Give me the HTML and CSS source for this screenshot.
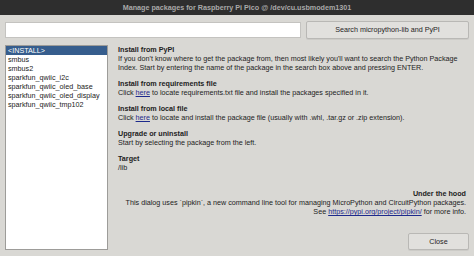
FILE: index.html
```html
<!DOCTYPE html>
<html>
<head>
<meta charset="utf-8">
<link rel="stylesheet" href="styles.css">
</head>
<body>
<div class="window">
  <div class="titlebar">Manage packages for Raspberry Pi Pico @ /dev/cu.usbmodem1301</div>
  <div class="searchrow">
    <div class="search-input"></div>
    <div class="btn search-btn">Search micropython-lib and PyPI</div>
  </div>
  <div class="main">
    <ul class="pkglist">
      <li class="selected">&lt;INSTALL&gt;</li>
      <li>smbus</li>
      <li>smbus2</li>
      <li>sparkfun_qwiic_i2c</li>
      <li>sparkfun_qwiic_oled_base</li>
      <li>sparkfun_qwiic_oled_display</li>
      <li>sparkfun_qwiic_tmp102</li>
    </ul>
    <div class="info">
      <div class="section">
        <div class="heading">Install from PyPI</div>
        <div>If you don't know where to get the package from, then most likely you'll want to search the Python Package Index. Start by entering the name of the package in the search box above and pressing ENTER.</div>
      </div>
      <div class="section">
        <div class="heading">Install from requirements file</div>
        <div>Click <a class="link">here</a> to locate requirements.txt file and install the packages specified in it.</div>
      </div>
      <div class="section">
        <div class="heading">Install from local file</div>
        <div>Click <a class="link">here</a> to locate and install the package file (usually with .whl, .tar.gz or .zip extension).</div>
      </div>
      <div class="section">
        <div class="heading">Upgrade or uninstall</div>
        <div>Start by selecting the package from the left.</div>
      </div>
      <div class="section">
        <div class="heading">Target</div>
        <div>/lib</div>
      </div>
      <div class="hood">
        <div class="heading">Under the hood</div>
        <div>This dialog uses `pipkin`, a new command line tool for managing MicroPython and CircuitPython packages.</div>
        <div>See <a class="link">https://pypi.org/project/pipkin/</a> for more info.</div>
      </div>
      <div class="footer">
        <div class="btn close-btn">Close</div>
      </div>
    </div>
  </div>
</div>
</body>
</html>
```
FILE: styles.css
```css
* { box-sizing: border-box; }
html, body { margin: 0; padding: 0; }
body {
  width: 474px;
  height: 256px;
  overflow: hidden;
  background: #d9d8d4;
  font-family: "Liberation Sans", Arial, sans-serif;
  font-size: 7.2px;
  color: #222222;
}
.window { display: flex; flex-direction: column; height: 256px; }
.titlebar {
  height: 15px;
  background: #2e2e2e;
  color: #a9a9a9;
  font-weight: bold;
  font-size: 7.2px;
  line-height: 15px;
  text-align: center;
}
.searchrow {
  display: flex;
  gap: 5px;
  padding: 6px 5px 6px 5px;
  align-items: center;
  height: 39px;
}
.search-input {
  width: 296px;
  height: 16px;
  background: #ffffff;
  border: 1px solid #c4c3c0;
}
.btn {
  background: #e1e0dd;
  border: 1px solid #b9b8b5;
  border-radius: 2px;
  text-align: center;
  color: #1e1e1e;
  box-shadow: 0 1px 0 rgba(0,0,0,0.06);
}
.search-btn {
  flex: 1;
  height: 18px;
  line-height: 16px;
}
.main {
  flex: 1;
  display: flex;
  gap: 10px;
  padding: 0 5px 6px 5px;
}
.pkglist {
  list-style: none;
  margin: 0;
  padding: 0;
  width: 103px;
  height: 205px;
  background: #ffffff;
  border: 1px solid #9d9c99;
  line-height: 9px;
}
.pkglist li { padding-left: 2px; white-space: nowrap; }
.pkglist li.selected {
  background: #365d8d;
  color: #ffffff;
}
.info {
  flex: 1;
  display: flex;
  flex-direction: column;
  line-height: 9px;
  padding-right: 3px;
}
.section { margin-bottom: 7px; }
.heading { font-weight: bold; }
.link { color: #1d2a8c; text-decoration: underline; }
.hood {
  margin-top: 10px;
  text-align: right;
}
.footer {
  margin-top: auto;
  display: flex;
  justify-content: flex-end;
  margin-right: -3px;
}
.close-btn {
  width: 61px;
  height: 17px;
  line-height: 15px;
}
```
